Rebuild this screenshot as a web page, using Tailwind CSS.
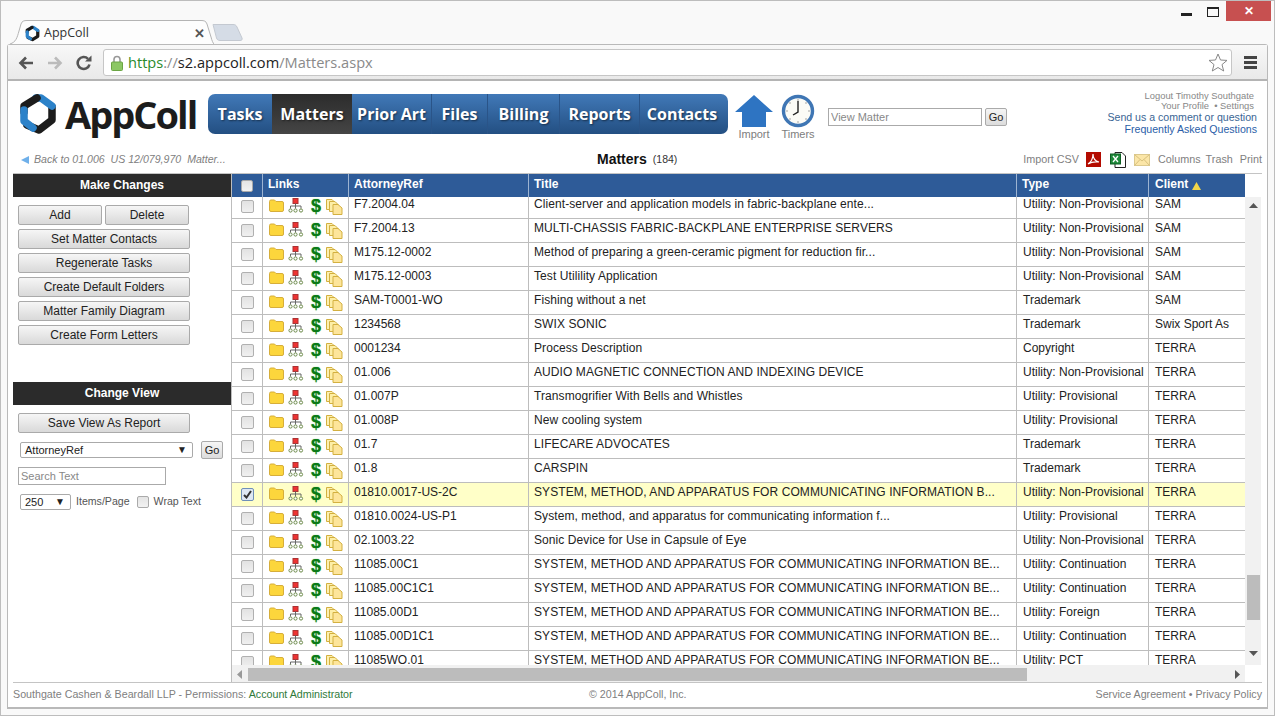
<!DOCTYPE html>
<html lang="en">
<head>
  <meta charset="UTF-8">
  <title>AppColl</title>
  <script src="https://cdn.jsdelivr.net/npm/@tailwindcss/browser@4"></script>
</head>
<body class="bg-[#f8f8f8] font-['Liberation_Sans',Arial,sans-serif]">
  <div class="w-[1275px] h-[716px] overflow-hidden flex flex-col bg-[#f9f9f9] border border-[#bdbdbd]">

    <!-- Tab strip -->
    <div class="h-[43px] flex justify-between pl-[9px] shrink-0">
      <div class="flex items-end">
        <div class="relative w-[204px] h-[24px] flex items-center pl-[14px] pt-[3px]">
          <svg class="absolute left-0 top-0" width="204" height="24" viewBox="0 0 204 24">
            <path d="M0 24 C6 22 7 18 9 11 L11 4 C12 1 14 0.5 17 0.5 L191 0.5 C194 0.5 196 1 197 4 L201 17 C202 21 203 23 204 24" fill="#fdfdfd" stroke="#b4b4b4"/>
          </svg>
          <svg class="relative" width="17" height="17" viewBox="0 0 40 42">
            <g fill="none" stroke-width="8" stroke-linejoin="round" stroke-linecap="round">
              <path d="M33 14 V28 L20 36 L9 31" stroke="#1c1c1c"/>
              <path d="M18 6 L22 6 L33 13" stroke="#2c82c9"/>
              <path d="M7 18 V13 L19 6" stroke="#1c1c1c"/>
              <path d="M7 17 V28 L15 34" stroke="#2c82c9"/>
            </g>
          </svg>
          <span class="relative ml-[3px] text-[12.5px] text-[#333] font-['Open_Sans',sans-serif]">AppColl</span>
          <span class="relative ml-auto mr-[9px] text-[13px] leading-none font-bold text-[#555]">✕</span>
        </div>
        <svg class="mb-[3px] -ml-[2px]" width="32" height="17" viewBox="0 0 32 17">
          <path d="M1 0.5 L21 0.5 C23 0.5 24 1 25 3 L30 14 C30.5 15.5 30 16.5 28 16.5 L8 16.5 C6 16.5 5 15.5 4.5 14 Z" fill="#d5dce6" stroke="#c4c9d1"/>
        </svg>
      </div>
      <div class="flex items-start">
        <div class="w-[11px] h-[3px] bg-[#222] mt-[12px] mr-[15px]"></div>
        <div class="w-[10px] h-[7px] border border-[#222] border-t-2 mt-[6px] mr-[7px] box-content"></div>
        <div class="w-[45px] h-[20px] bg-[#c75050] mr-[3px] flex items-center justify-center text-white text-[12px] font-bold leading-none">✕</div>
      </div>
    </div>

    <!-- Browser toolbar and page -->
    <div class="mx-[6px] mb-[6px] flex-1 min-h-0 flex flex-col border-l border-r border-b-2 border-t border-[#b9b9b9] rounded-t-[3px] bg-white">
      <div class="h-[36px] shrink-0 flex items-center bg-gradient-to-b from-[#f8f8f8] to-[#e9e9e9] border-b-2 border-[#b4b4b4] pl-[10px] pr-[10px] pt-[1px]">
        <svg width="16" height="14" viewBox="0 0 16 14" class="mr-[13px]"><path d="M15 7 H3 M8 1.5 L2.5 7 L8 12.5" fill="none" stroke="#555" stroke-width="2.6"/></svg>
        <svg width="16" height="14" viewBox="0 0 16 14" class="mr-[13px]"><path d="M1 7 H13 M8 1.5 L13.5 7 L8 12.5" fill="none" stroke="#bbb" stroke-width="2.6"/></svg>
        <svg width="16" height="16" viewBox="0 0 16 16" class="mr-[11px]"><path d="M13.5 9.5 A6 6 0 1 1 12 3.8" fill="none" stroke="#555" stroke-width="2.6"/><path d="M9 6.5 H15.5 V0.5 Z" fill="#555"/></svg>
        <div class="w-[1129px] h-[27px] bg-white border border-[#c6c6c6] rounded-[3px] flex items-center pl-[7px] pr-[3px]">
          <svg width="12" height="16" viewBox="0 0 12 16" class="mr-[5px]"><path d="M3 7 V4.5 A3 3 0 0 1 9 4.5 V7" fill="none" stroke="#999" stroke-width="1.6"/><rect x="0.5" y="7" width="11" height="8.5" rx="1" fill="#8cc764" stroke="#6ba544"/></svg>
          <span class="text-[14.6px] font-['Open_Sans',sans-serif] text-[#8a8a8a]"><span class="text-[#2a8a2a]">https</span>://<span class="text-[#222]">s2.appcoll.com</span>/Matters.aspx</span>
          <svg width="20" height="19" viewBox="0 0 20 19" class="ml-auto"><path d="M10 1 L12.5 7 L19 7.4 L14 11.6 L15.7 18 L10 14.5 L4.3 18 L6 11.6 L1 7.4 L7.5 7 Z" fill="#fff" stroke="#888"/></svg>
        </div>
        <div class="ml-[12px] w-[13px] flex flex-col gap-[2px]">
          <div class="h-[3px] bg-[#444]"></div><div class="h-[3px] bg-[#444]"></div><div class="h-[3px] bg-[#444]"></div>
        </div>
      </div>

      <!-- Page -->
      <div class="flex-1 min-h-0 flex flex-col px-[5px] text-[#222]">
        <!-- Top nav -->
        <div class="h-[65px] shrink-0 flex items-start">
          <svg width="40" height="42" viewBox="0 0 40 42" class="ml-[5px] mt-[12px] shrink-0">
            <g fill="none" stroke-width="7.5" stroke-linejoin="round" stroke-linecap="round">
              <path d="M34 14 V27 L21 37 L9 32" stroke="#1c1c1c"/>
              <path d="M18 5 L23 5 L34 13" stroke="#2c82c9"/>
              <path d="M6 19 V13 L19 5" stroke="#1c1c1c"/>
              <path d="M6 17 V28 L15 35" stroke="#2c82c9"/>
            </g>
          </svg>
          <div class="ml-[7px] w-[143px] mt-[9px] text-[38px] leading-[48px] font-bold tracking-[-2px] text-[#1c1c1c] font-['Open_Sans',sans-serif] whitespace-nowrap">AppColl</div>
          <div class="mt-[13px] h-[40px] w-[520px] shrink-0 flex rounded-[7px] overflow-hidden text-white text-[16px] font-bold font-['Open_Sans',sans-serif] [text-shadow:1px_1px_2px_rgba(0,0,0,0.5)] bg-gradient-to-b from-[#4179b8] to-[#234f82]">
            <div class="w-[64px] flex items-center justify-center">Tasks</div>
            <div class="w-[80px] flex items-center justify-center bg-gradient-to-b from-[#2c2c2c] to-[#454545]">Matters</div>
            <div class="w-[80px] flex items-center justify-center border-r border-[#2a5488]">Prior Art</div>
            <div class="w-[56px] flex items-center justify-center border-r border-[#2a5488]">Files</div>
            <div class="w-[72px] flex items-center justify-center border-r border-[#2a5488]">Billing</div>
            <div class="w-[80px] flex items-center justify-center border-r border-[#2a5488]">Reports</div>
            <div class="w-[88px] pr-[4px] flex items-center justify-center">Contacts</div>
          </div>
          <div class="ml-[6px] w-[40px] mt-[14px] flex flex-col items-center shrink-0">
            <svg width="38" height="32" viewBox="0 0 38 32"><path d="M19 0 L38 17 H31 V32 H7 V17 H0 Z" fill="#2e74c2"/></svg>
            <span class="text-[11px] leading-[13px] mt-[1px] text-[#7d7d7d]">Import</span>
          </div>
          <div class="ml-[4px] w-[40px] mt-[13px] flex flex-col items-center shrink-0">
            <svg width="34" height="34" viewBox="0 0 34 34">
              <circle cx="17" cy="17" r="14.5" fill="#fbfbf6" stroke="#3f76b4" stroke-width="3.4"/>
              <path d="M17 7 V18 L12 21" fill="none" stroke="#222" stroke-width="1.4"/>
              <g fill="#999"><circle cx="17" cy="6" r="0.8"/><circle cx="17" cy="28" r="0.8"/><circle cx="6" cy="17" r="0.8"/><circle cx="28" cy="17" r="0.8"/><circle cx="9" cy="9" r="0.8"/><circle cx="25" cy="9" r="0.8"/><circle cx="9" cy="25" r="0.8"/><circle cx="25" cy="25" r="0.8"/></g>
            </svg>
            <span class="text-[11px] leading-[13px] text-[#7d7d7d]">Timers</span>
          </div>
          <input type="text" placeholder="View Matter" class="ml-[10px] mt-[27px] w-[154px] h-[18px] border border-[#aaa] px-[2px] text-[11px] placeholder:text-[#888] shrink-0 outline-none">
          <button class="ml-[3px] mt-[27px] w-[22px] h-[18px] border border-[#aaa] rounded-[2px] bg-gradient-to-b from-[#f5f5f5] to-[#dcdcdc] text-[11px] leading-none">Go</button>
          <div class="ml-auto mr-[5px] mt-[10px] text-right text-[9.4px] leading-[10px] text-[#888]">
            <div class="pr-[3px]">Logout Timothy Southgate</div>
            <div class="pr-[3px]">Your Profile &nbsp;• Settings</div>
            <div class="text-[10.6px] leading-[12px] text-[#3a6594]">Send us a comment or question</div>
            <div class="text-[10.6px] leading-[12px] text-[#2a5ea8]">Frequently Asked Questions</div>
          </div>
        </div>

        <!-- Sub header -->
        <div class="h-[27px] shrink-0 flex items-center ml-[7px]">
          <svg width="8" height="8" viewBox="0 0 8 8" class="ml-[1px]"><path d="M8 0 V8 L0 4 Z" fill="#6fb0ea"/></svg>
          <span class="ml-[5px] w-[563px] text-[10.6px] italic text-[#808080] whitespace-pre">Back to 01.006  US 12/079,970  Matter...</span>
          <span class="text-[14px] font-bold text-[#111]">Matters</span>
          <span class="ml-[6px] text-[10.5px] text-[#333]">(184)</span>
          <div class="ml-auto flex items-center text-[10.8px] text-[#808080]">
            <span>Import CSV</span>
            <svg width="15" height="15" viewBox="0 0 15 15" class="ml-[7px]"><rect width="15" height="15" fill="#b30b00"/><path d="M2 12 C5 10 7 6 7 2 C7 6 9 9 13 10 C9 9.5 5 10 2 12 Z" fill="none" stroke="#fff" stroke-width="1.2"/></svg>
            <svg width="16" height="16" viewBox="0 0 16 16" class="ml-[9px]"><path d="M5 0.5 H12 L15.5 4 V15.5 H5 Z" fill="#fff" stroke="#222"/><rect x="0.5" y="2" width="10" height="10" fill="#1f8a3b" stroke="#0d5f22"/><path d="M3 4 L8 10 M8 4 L3 10" stroke="#fff" stroke-width="1.3"/></svg>
            <svg width="16" height="12" viewBox="0 0 16 12" class="ml-[8px]"><rect x="0.5" y="0.5" width="15" height="11" fill="#fbe6a8" stroke="#dcc98e"/><path d="M0.5 0.5 L8 7 L15.5 0.5 M0.5 11.5 L6 5.5 M15.5 11.5 L10 5.5" fill="none" stroke="#d8c07e"/></svg>
            <span class="ml-[8px]">Columns</span>
            <span class="ml-[5px]">Trash</span>
            <span class="ml-[7px]">Print</span>
          </div>
        </div>

        <!-- Main -->
        <div class="flex-1 min-h-0 flex border-t border-[#c4c4c4]">
          <!-- Sidebar -->
          <div class="w-[219px] shrink-0 border-r border-[#bdbdbd]">
            <div class="h-[23px] pb-[1px] bg-[#2b2b2b] text-white text-[12px] font-bold flex items-center justify-center">Make Changes</div>
            <div class="pl-[5px] pt-[8px] flex flex-col gap-[4px] text-[12px] text-[#222]">
              <div class="flex gap-[3px]">
                <button class="w-[84px] h-[20px] border border-[#aaa] rounded-[2px] bg-gradient-to-b from-[#f6f6f6] to-[#d9d9d9] leading-none">Add</button>
                <button class="w-[84px] h-[20px] border border-[#aaa] rounded-[2px] bg-gradient-to-b from-[#f6f6f6] to-[#d9d9d9] leading-none">Delete</button>
              </div>
              <button class="w-[172px] h-[20px] border border-[#aaa] rounded-[2px] bg-gradient-to-b from-[#f6f6f6] to-[#d9d9d9] leading-none">Set Matter Contacts</button>
              <button class="w-[172px] h-[20px] border border-[#aaa] rounded-[2px] bg-gradient-to-b from-[#f6f6f6] to-[#d9d9d9] leading-none">Regenerate Tasks</button>
              <button class="w-[172px] h-[20px] border border-[#aaa] rounded-[2px] bg-gradient-to-b from-[#f6f6f6] to-[#d9d9d9] leading-none">Create Default Folders</button>
              <button class="w-[172px] h-[20px] border border-[#aaa] rounded-[2px] bg-gradient-to-b from-[#f6f6f6] to-[#d9d9d9] leading-none">Matter Family Diagram</button>
              <button class="w-[172px] h-[20px] border border-[#aaa] rounded-[2px] bg-gradient-to-b from-[#f6f6f6] to-[#d9d9d9] leading-none">Create Form Letters</button>
            </div>
            <div class="mt-[37px] h-[23px] pb-[1px] bg-[#2b2b2b] text-white text-[12px] font-bold flex items-center justify-center">Change View</div>
            <div class="pl-[5px] pt-[8px] text-[12px] text-[#222]">
              <button class="w-[172px] h-[20px] border border-[#aaa] rounded-[2px] bg-gradient-to-b from-[#f6f6f6] to-[#d9d9d9] leading-none">Save View As Report</button>
              <div class="flex items-center mt-[8px] ml-[2px]">
                <div class="w-[173px] h-[16px] border border-[#aaa] rounded-[2px] flex items-center justify-between pl-[4px] pr-[5px] text-[11px]"><span>AttorneyRef</span><span class="text-[10px] leading-none">▼</span></div>
                <button class="ml-[8px] w-[22px] h-[18px] border border-[#aaa] rounded-[2px] bg-gradient-to-b from-[#f6f6f6] to-[#dcdcdc] text-[11px] leading-none">Go</button>
              </div>
              <input type="text" placeholder="Search Text" class="block mt-[8px] w-[148px] h-[18px] border border-[#aaa] px-[2px] text-[11px] placeholder:text-[#888] outline-none">
              <div class="flex items-center mt-[9px] ml-[2px] text-[10.6px] text-[#555]">
                <div class="w-[51px] h-[16px] border border-[#aaa] rounded-[2px] flex items-center justify-between pl-[4px] pr-[5px] text-[#222] text-[11px]"><span>250</span><span class="text-[10px] leading-none">▼</span></div>
                <span class="ml-[5px]">Items/Page</span>
                <span class="ml-[7px] w-[12px] h-[12px] border border-[#aaa] rounded-[2px] bg-gradient-to-b from-[#e4e4e4] to-[#f2f2f2]"></span>
                <span class="ml-[5px]">Wrap Text</span>
              </div>
            </div>
          </div>

          <!-- Grid -->
          <div class="w-[1030px] shrink-0 flex flex-col">
            <div class="h-[23px] shrink-0 flex">
              <div class="w-[1013px] flex bg-[#2e5b98] text-white text-[12px] font-bold leading-[21px]">
                <div class="w-[31px] border-r border-[#9db4d2] flex items-center justify-center"><span class="w-[12px] h-[12px] border border-[#aaa] rounded-[2px] bg-gradient-to-b from-[#e4e4e4] to-[#f2f2f2]"></span></div>
                <div class="w-[86px] border-r border-[#9db4d2] pl-[5px]">Links</div>
                <div class="w-[180px] border-r border-[#9db4d2] pl-[5px]">AttorneyRef</div>
                <div class="w-[488px] border-r border-[#9db4d2] pl-[5px]">Title</div>
                <div class="w-[132px] border-r border-[#9db4d2] pl-[5px]">Type</div>
                <div class="w-[96px] pl-[6px] pb-[2px] flex items-center">Client<svg width="9" height="8" viewBox="0 0 9 8" class="ml-[4px] mt-[2px]"><path d="M4.5 0 L9 8 H0 Z" fill="#f2d648"/></svg></div>
              </div>
            </div>
            <div class="h-[468px] shrink-0 flex">
              <div class="w-[1013px] h-[468px] overflow-hidden">
                <div id="rows" class="-mt-[2px]"></div>
              </div>
              <div class="w-[16px] h-[468px] bg-[#f1f1f1] flex flex-col items-center">
                <svg width="9" height="5" viewBox="0 0 9 5" class="mt-[6px]"><path d="M4.5 0 L9 5 H0 Z" fill="#555"/></svg>
                <div class="w-[13px] h-[45px] bg-[#bcbcbc] mt-[367px]"></div>
                <svg width="9" height="5" viewBox="0 0 9 5" class="mt-[31px]"><path d="M4.5 5 L9 0 H0 Z" fill="#555"/></svg>
              </div>
            </div>
            <div class="h-[18px] shrink-0 w-[1013px] bg-[#f1f1f1] flex items-center">
              <svg width="5" height="9" viewBox="0 0 5 9" class="ml-[5px]"><path d="M0 4.5 L5 0 V9 Z" fill="#999"/></svg>
              <div class="ml-[6px] w-[779px] h-[13px] bg-[#bcbcbc]"></div>
              <svg width="5" height="9" viewBox="0 0 5 9" class="ml-[208px]"><path d="M5 4.5 L0 0 V9 Z" fill="#555"/></svg>
            </div>
          </div>
        </div>

        <!-- Footer -->
        <div class="h-[25px] pb-[2px] shrink-0 border-t border-[#c4c4c4] flex items-center text-[10.7px] text-[#808080] whitespace-nowrap">
          <span class="w-[576px]">Southgate Cashen &amp; Beardall LLP - Permissions: <span class="text-[#2f7a3a]">Account Administrator</span></span>
          <span>© 2014 AppColl, Inc.</span>
          <span class="ml-auto">Service Agreement • Privacy Policy</span>
        </div>
      </div>
    </div>
  </div>

  <script>
    const U = 'Utility: Non-Provisional';
    const P = 'Utility: Provisional';
    const C = 'Utility: Continuation';
    const BE = 'SYSTEM, METHOD AND APPARATUS FOR COMMUNICATING INFORMATION BE...';
    const matters = [
      ['F7.2004.04', 'Client-server and application models in fabric-backplane ente...', U, 'SAM'],
      ['F7.2004.13', 'MULTI-CHASSIS FABRIC-BACKPLANE ENTERPRISE SERVERS', U, 'SAM'],
      ['M175.12-0002', 'Method of preparing a green-ceramic pigment for reduction fir...', U, 'SAM'],
      ['M175.12-0003', 'Test Utilility Application', U, 'SAM'],
      ['SAM-T0001-WO', 'Fishing without a net', 'Trademark', 'SAM'],
      ['1234568', 'SWIX SONIC', 'Trademark', 'Swix Sport As'],
      ['0001234', 'Process Description', 'Copyright', 'TERRA'],
      ['01.006', 'AUDIO MAGNETIC CONNECTION AND INDEXING DEVICE', U, 'TERRA'],
      ['01.007P', 'Transmogrifier With Bells and Whistles', P, 'TERRA'],
      ['01.008P', 'New cooling system', P, 'TERRA'],
      ['01.7', 'LIFECARE ADVOCATES', 'Trademark', 'TERRA'],
      ['01.8', 'CARSPIN', 'Trademark', 'TERRA'],
      ['01810.0017-US-2C', 'SYSTEM, METHOD, AND APPARATUS FOR COMMUNICATING INFORMATION B...', U, 'TERRA', true],
      ['01810.0024-US-P1', 'System, method, and apparatus for communicating information f...', P, 'TERRA'],
      ['02.1003.22', 'Sonic Device for Use in Capsule of Eye', U, 'TERRA'],
      ['11085.00C1', BE, C, 'TERRA'],
      ['11085.00C1C1', BE, C, 'TERRA'],
      ['11085.00D1', BE, 'Utility: Foreign', 'TERRA'],
      ['11085.00D1C1', BE, C, 'TERRA'],
      ['11085WO.01', BE, 'Utility: PCT', 'TERRA']
    ];

    const linkIcons = `
      <svg width="15" height="13" viewBox="0 0 15 13" class="mt-[1px]"><path d="M0.5 2.5 Q0.5 1 2 1 H5.5 L7 2.5 H13 Q14.5 2.5 14.5 4 V11 Q14.5 12.5 13 12.5 H2 Q0.5 12.5 0.5 11 Z" fill="#fcd63c" stroke="#d6ae3a"/></svg>
      <svg width="16" height="15" viewBox="0 0 16 15" class="ml-[4px]"><rect x="5" y="0.5" width="5" height="5" fill="#e33" stroke="#a33"/><path d="M7.5 5.5 V8 M2.5 10.5 V8 H13 V10.5 M7.5 8 V10.5" fill="none" stroke="#666"/><g fill="#fff" stroke="#6c8a4a"><circle cx="2.5" cy="12.5" r="1.6"/><circle cx="7.5" cy="12.5" r="1.6"/><circle cx="13" cy="12.5" r="1.6"/></g></svg>
      <span class="ml-[6px] mt-[1px] w-[12px] text-center text-[18px] leading-[15px] font-bold text-[#0a7a17] [text-shadow:0_0_1px_#4a4]">$</span>
      <svg width="17" height="16" viewBox="0 0 17 16" class="ml-[4px] mt-[1px]"><path d="M0.5 0.5 H6 L9 3.5 V10.5 H0.5 Z" fill="#fdf0b0" stroke="#d3b040"/><path d="M3.5 2.5 H9 L12 5.5 V12.5 H3.5 Z" fill="#fdeea6" stroke="#d3b040"/><path d="M7 5.5 H12 L16 9 V15.5 H7 Z" fill="#fde59a" stroke="#d3b040"/></svg>`;

    // Render matter rows
    document.getElementById('rows').innerHTML = matters.map(m => `
      <div class="h-[24px] flex border-b border-[#bdbdbd] text-[12px] leading-[14px] text-[#222] ${m[4] ? 'bg-[#ffffc8]' : 'bg-white'}">
        <div class="w-[31px] border-r border-[#bdbdbd] flex justify-center pt-[5px]">
          ${m[4]
            ? '<span class="w-[13px] h-[13px] border border-[#6f8fb8] rounded-[2px] bg-[#dfe8f3] flex items-center justify-center"><svg width="9" height="9" viewBox="0 0 9 9"><path d="M1 5 L3.5 7.5 L8 1" fill="none" stroke="#333" stroke-width="2"/></svg></span>'
            : '<span class="w-[13px] h-[13px] border border-[#b0b0b0] rounded-[2px] bg-gradient-to-b from-[#e2e2e2] to-[#f0f0f0]"></span>'}
        </div>
        <div class="w-[86px] border-r border-[#bdbdbd] flex items-start pl-[6px] pt-[3px]">${linkIcons}</div>
        <div class="w-[180px] border-r border-[#bdbdbd] pl-[5px] pt-[2px]">${m[0]}</div>
        <div class="w-[488px] border-r border-[#bdbdbd] pl-[5px] pt-[2px] whitespace-nowrap overflow-hidden tracking-[0.08px]">${m[1]}</div>
        <div class="w-[132px] border-r border-[#bdbdbd] pl-[6px] pt-[2px] whitespace-nowrap">${m[2]}</div>
        <div class="w-[96px] pl-[6px] pt-[2px] whitespace-nowrap">${m[3]}</div>
      </div>`).join('');
  </script>
</body>
</html>
